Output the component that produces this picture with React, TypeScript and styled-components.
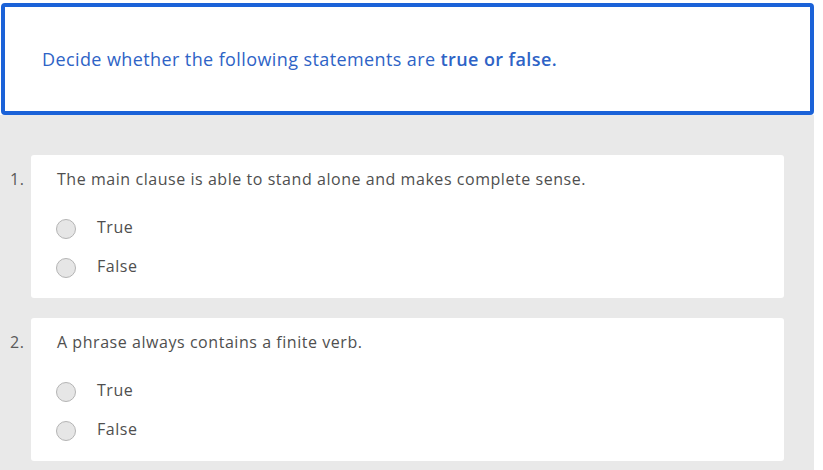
import styled, { createGlobalStyle } from "styled-components";

const GlobalStyle = createGlobalStyle`
  body {
    margin: 0;
    background: #ffffff;
    font-family: "Open Sans", "Noto Sans", sans-serif;
  }
`;

const Page = styled.div`
  width: 814px;
  padding-top: 3px;
`;

const Header = styled.div`
  margin-left: 1px;
  height: 112px;
  box-sizing: border-box;
  border: 4px solid #1b62d8;
  border-radius: 4px;
  display: flex;
  align-items: center;
  padding: 0 0 0 37px;
  background: #fff;
`;

const Instruction = styled.p`
  margin: 0;
  font-size: 18px;
  color: #2e63c6;
  letter-spacing: 0.4px;

  b {
    font-weight: 600;
  }
`;

const Panel = styled.div`
  background: #e9e9e9;
  padding: 40px 30px 9px 0;
  display: flex;
  flex-direction: column;
  gap: 20px;
`;

const Item = styled.div`
  display: flex;
`;

const Number = styled.div`
  width: 31px;
  box-sizing: border-box;
  padding: 13px 0 0 10px;
  font-size: 16px;
  line-height: 22px;
  letter-spacing: 0.6px;
  color: #5a5a5a;
`;

const Card = styled.div`
  flex: 1;
  height: 143px;
  box-sizing: border-box;
  background: #fff;
  border-radius: 3px;
  padding: 13px 26px 0 25px;
`;

const Question = styled.p`
  margin: 0 0 0 1px;
  font-size: 16px;
  line-height: 22px;
  letter-spacing: 0.55px;
  color: #4f4f4f;
`;

const Options = styled.div`
  margin-top: 25px;
  display: flex;
  flex-direction: column;
  gap: 15px;
`;

const Option = styled.label`
  display: flex;
  align-items: center;
  height: 24px;
  gap: 21px;
  font-size: 16px;
  letter-spacing: 0.55px;
  color: #4f4f4f;
  cursor: pointer;
`;

const Radio = styled.span`
  width: 20px;
  height: 20px;
  box-sizing: border-box;
  border-radius: 50%;
  border: 1px solid #b4b4b4;
  background: #e6e6e6;
  margin-top: 3px;
`;

const questions = [
  "The main clause is able to stand alone and makes complete sense.",
  "A phrase always contains a finite verb.",
];

export default function App() {
  return (
    <>
      <GlobalStyle />
      <Page>
        <Header>
          <Instruction>
            Decide whether the following statements are <b>true or false.</b>
          </Instruction>
        </Header>
        <Panel>
          {questions.map((q, i) => (
            <Item key={q}>
              <Number>{i + 1}.</Number>
              <Card>
                <Question>{q}</Question>
                <Options>
                  <Option>
                    <Radio />
                    True
                  </Option>
                  <Option>
                    <Radio />
                    False
                  </Option>
                </Options>
              </Card>
            </Item>
          ))}
        </Panel>
      </Page>
    </>
  );
}
